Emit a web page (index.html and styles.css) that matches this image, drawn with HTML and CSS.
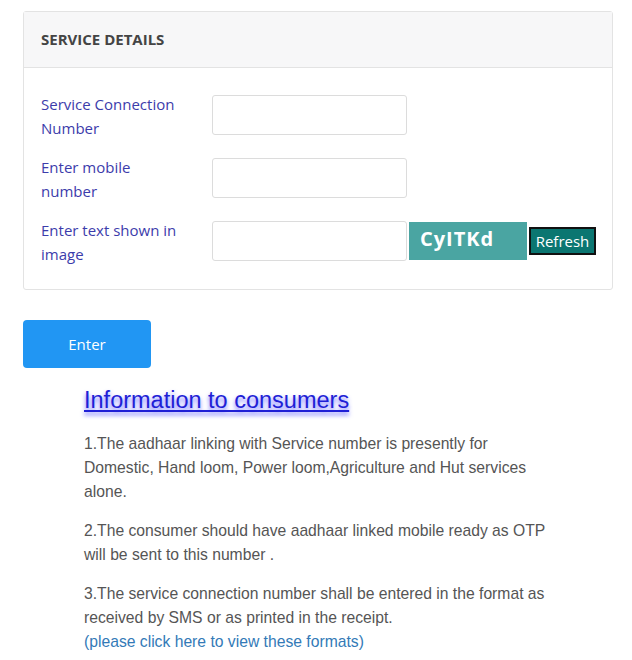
FILE: index.html
```html
<!DOCTYPE html>
<html lang="en">
<head>
  <meta charset="UTF-8" />
  <meta name="viewport" content="width=device-width, initial-scale=1.0">
  <title>Aadhaar linking</title>
  <link rel="stylesheet" href="styles.css">
</head>
<body>

  <!-- Dados do serviço -->
  <div class="card">
    <div class="card-header">SERVICE DETAILS</div>
    <div class="card-body">
      <div class="form-row">
        <label class="form-label" for="scno">Service Connection Number</label>
        <input class="form-input" type="text" id="scno">
      </div>
      <div class="form-row">
        <label class="form-label" for="mobile">Enter mobile number</label>
        <input class="form-input" type="text" id="mobile">
      </div>
      <div class="form-row">
        <label class="form-label" for="captcha">Enter text shown in image</label>
        <input class="form-input" type="text" id="captcha">
        <div class="captcha-box">CyITKd</div>
        <button class="refresh-button">Refresh</button>
      </div>
    </div>
  </div>

  <button class="enter-button">Enter</button>

  <div class="info">
    <h2 class="info-title"><a href="#">Information to consumers</a></h2>
    <p>1.The aadhaar linking with Service number is presently for Domestic, Hand loom, Power loom,Agriculture and Hut services alone.</p>
    <p>2.The consumer should have aadhaar linked mobile ready as OTP will be sent to this number .</p>
    <p>3.The service connection number shall be entered in the format as received by SMS or as printed in the receipt.<br>
      <a class="formats-link" href="#">(please click here to view these formats)</a></p>
  </div>

</body>
</html>
```

FILE: styles.css
```css
body {
  margin: 0;
  padding: 11px 19px 0 23px;
  background: #fff;
  font-family: 'Open Sans', sans-serif;
}

.card {
  width: 590px;
  border: 1px solid #e3e3e3;
  border-radius: 3px;
  box-sizing: border-box;
}

.card-header {
  height: 55px;
  line-height: 55px;
  padding-left: 17px;
  background-color: #f7f7f8;
  border-bottom: 1px solid #e3e3e3;
  font-size: 15px;
  font-weight: 700;
  color: #444;
}

.card-body {
  padding: 27px 0 28px 17px;
  display: flex;
  flex-direction: column;
  gap: 23px;
}

.form-row {
  display: flex;
  align-items: flex-start;
  height: 40px;
}

.form-label {
  width: 171px;
  padding-right: 31px;
  box-sizing: border-box;
  margin-top: -3px;
  font-size: 15px;
  line-height: 24px;
  color: #3c3cab;
}

.form-input {
  width: 195px;
  height: 40px;
  box-sizing: border-box;
  border: 1px solid #dcdcdc;
  border-radius: 3px;
  margin: 0;
}

/* Imagem do captcha */
.captcha-box {
  width: 118px;
  height: 38px;
  margin: 1px 0 0 2px;
  padding-left: 11px;
  box-sizing: border-box;
  background-color: #4aa5a2;
  color: #fff;
  font-size: 20px;
  font-weight: 700;
  letter-spacing: 1px;
  line-height: 34px;
}

.refresh-button {
  width: 67px;
  height: 28px;
  margin: 6px 0 0 2px;
  background-color: #0b7671;
  border: 2px solid #111;
  color: #fff;
  font-family: 'Open Sans', sans-serif;
  font-size: 15px;
  line-height: 22px;
  padding: 0;
}

.enter-button {
  display: block;
  width: 128px;
  height: 48px;
  margin-top: 30px;
  background-color: #2196f3;
  border: none;
  border-radius: 4px;
  color: #fff;
  font-family: 'Open Sans', sans-serif;
  font-size: 15px;
}

.info {
  width: 468px;
  margin: 19px 0 0 61px;
  font-family: 'Liberation Sans', Arial, sans-serif;
  font-size: 15.7px;
  line-height: 24px;
  color: #555;
}

.info-title {
  margin: 0 0 19px;
  font-size: 23.5px;
  font-weight: 400;
  line-height: 26px;
}

.info-title a {
  color: #1f1fd6;
  text-shadow: 0 3px 4px rgba(50, 50, 255, 0.7);
}

.info p {
  margin: 0 0 15px;
}

.formats-link {
  color: #337ab7;
  text-decoration: none;
}
```
